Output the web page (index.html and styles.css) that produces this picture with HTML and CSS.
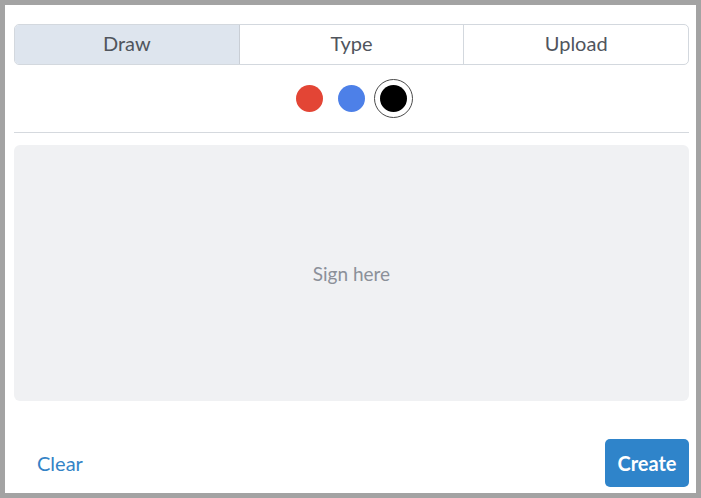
FILE: index.html
```html
<!DOCTYPE html>
<html>
<head>
<meta charset="utf-8">
<link rel="stylesheet" href="styles.css">
</head>
<body>
<div class="modal">
  <div class="tabs">
    <div class="tab active">Draw</div>
    <div class="tab">Type</div>
    <div class="tab">Upload</div>
  </div>
  <div class="colors">
    <span class="dot red"></span>
    <span class="dot blue"></span>
    <span class="dot black selected"></span>
  </div>
  <hr class="divider">
  <div class="pad">Sign here</div>
  <div class="footer">
    <button class="clear">Clear</button>
    <button class="create">Create</button>
  </div>
</div>
</body>
</html>
```

FILE: styles.css
```css
html, body {
  margin: 0;
  padding: 0;
}
body {
  font-family: Lato, "Noto Sans", sans-serif;
  background: #a3a3a3;
}
.modal {
  box-sizing: border-box;
  width: 701px;
  height: 498px;
  border: 5px solid #a3a3a3;
  background: #fff;
  padding: 19px 7px 0 9px;
  display: flex;
  flex-direction: column;
}
.tabs {
  display: flex;
  height: 41px;
  box-sizing: border-box;
  border: 1px solid #d3d8de;
  border-radius: 5px;
  overflow: hidden;
}
.tab {
  flex: 1;
  display: flex;
  align-items: center;
  justify-content: center;
  font-size: 20px;
  color: #50555d;
  border-left: 1px solid #d3d8de;
  padding-bottom: 3px;
}
.tab:first-child {
  border-left: none;
}
.tab.active {
  background: #dee5ee;
  border-right: 1px solid #c9ced5;
}
.tab.active + .tab {
  border-left: none;
}
.colors {
  display: flex;
  justify-content: center;
  align-items: center;
  gap: 15px;
  height: 39px;
  margin-top: 14px;
}
.dot {
  width: 27px;
  height: 27px;
  border-radius: 50%;
  display: block;
}
.red { background: #e34535; }
.blue { background: #4d80e8; }
.black { background: #000; }
.selected {
  outline: 1px solid #4a4a4a;
  outline-offset: 5px;
}
.divider {
  border: none;
  border-top: 1px solid #d5d9de;
  margin: 14px 0 0;
  height: 0;
}
.pad {
  margin-top: 12px;
  height: 256px;
  background: #f0f1f3;
  border-radius: 6px;
  display: flex;
  align-items: center;
  justify-content: center;
  font-size: 19px;
  color: #8b9099;
}
.footer {
  display: flex;
  justify-content: space-between;
  align-items: center;
  margin-top: 38px;
}
.clear {
  font-family: inherit;
  background: none;
  border: none;
  padding: 0 0 0 23px;
  font-size: 20px;
  color: #3483c6;
}
.create {
  font-family: inherit;
  width: 84px;
  height: 48px;
  border: none;
  border-radius: 5px;
  background: #2f84ca;
  color: #fff;
  font-weight: bold;
  font-size: 20px;
  padding: 0;
}
```
